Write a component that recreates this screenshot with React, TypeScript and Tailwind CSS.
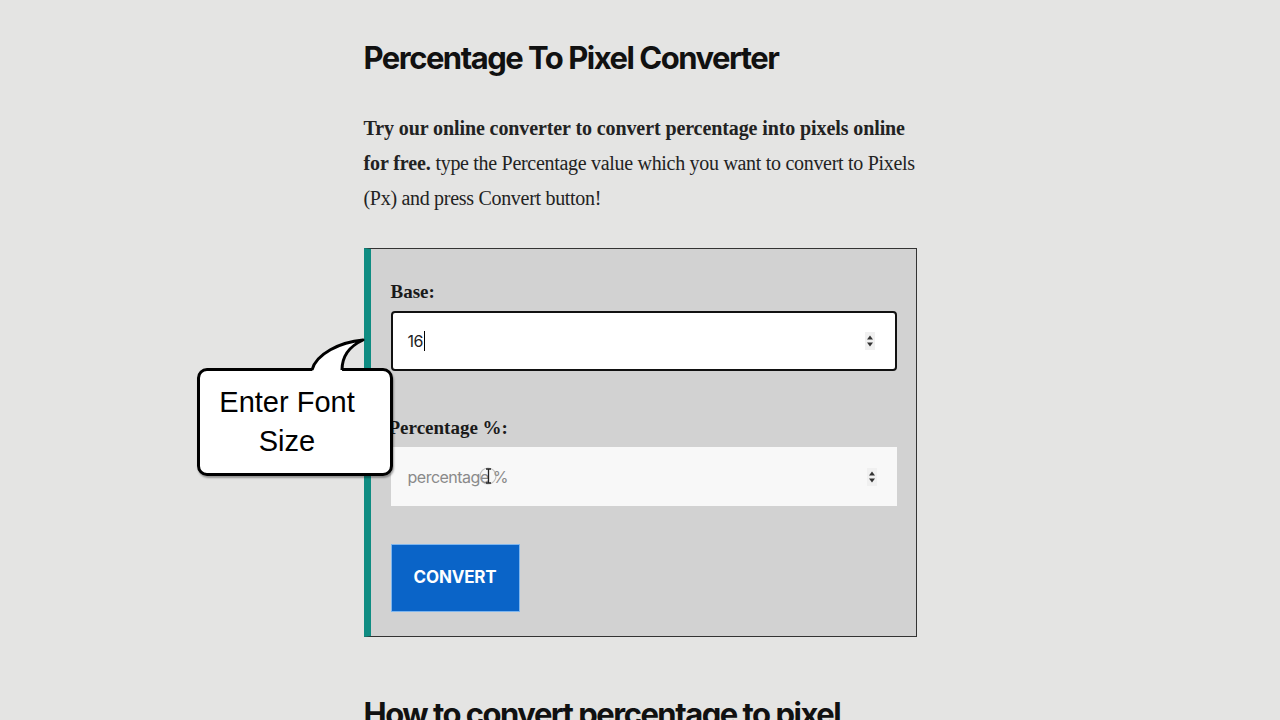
import React from "react";

export default function App() {
  return (
    <div className="relative min-h-[720px] h-[720px] overflow-hidden bg-[#e4e4e3]">
      <div className="mx-auto w-[553px] pt-[39px]">
        <h1 className="font-['Inter',sans-serif] text-[31px] leading-[37px] font-bold tracking-[-1.5px] text-[#111]">
          Percentage To Pixel Converter
        </h1>
        <p className="mt-[35px] whitespace-nowrap font-['Liberation_Serif',serif] text-[20px] leading-[35px] tracking-[-0.3px] text-[#222]">
          <span className="font-bold tracking-[-0.1px]">Try our online converter to convert percentage into pixels online<br />for free.</span>{" "}
          type the Percentage value which you want to convert to Pixels<br />(Px) and press Convert button!
        </p>

        <div className="mt-[32px] h-[389px] border border-[#333] border-l-[7px] border-l-[#0f8c82] bg-[#d2d2d2] pl-[20px] pr-[19px] pt-[31px]">
          <div className="font-['Liberation_Serif',serif] text-[19px] leading-[24px] font-bold text-[#1a1a1a] mb-[7px]">Base:</div>
          <div className="relative h-[60px] rounded-[4px] border-2 border-[#111] bg-white flex items-center pl-[15px]">
            <span className="font-['Inter',sans-serif] text-[16px] text-[#222] tracking-[-0.5px]">16</span>
            <span className="ml-[1px] inline-block h-[20px] w-[1px] bg-black"></span>
            <Spinner />
          </div>
          <div className="mt-[45px] -ml-[2px] font-['Liberation_Serif',serif] text-[19px] leading-[24px] font-bold text-[#1a1a1a] mb-[7px]">Percentage %:</div>
          <div className="relative h-[59px] bg-[#f8f8f8] flex items-center pl-[17px]">
            <span className="font-['Inter',sans-serif] text-[16px] text-[#8a8a8a] tracking-[-0.5px]">percentage %</span>
            <svg className="absolute left-[88px] top-[17px]" width="20" height="24" viewBox="0 0 20 24">
              <circle cx="9" cy="12" r="8" fill="none" stroke="#9a9a9a" strokeWidth="1.2" opacity="0.6" />
              <path d="M7 5h5M7 19h5M9.5 5v14" stroke="#222" strokeWidth="1.3" fill="none" />
            </svg>
            <Spinner />
          </div>
          <button className="mt-[38px] h-[68px] w-[129px] bg-[#0a64c8] border border-[#7fb6ee] text-white font-['Inter',sans-serif] font-bold text-[17px] tracking-[-0.2px]">
            CONVERT
          </button>
        </div>

        <h2 className="mt-[58px] font-['Inter',sans-serif] text-[31px] leading-[37px] font-bold tracking-[-1.5px] text-[#111]">
          How to convert percentage to pixel
        </h2>
      </div>

      {/* Callout */}
      <div className="absolute left-[197px] top-[368px] w-[196px] h-[108px] rounded-[10px] border-[3px] border-black bg-white flex items-center justify-center pr-[16px] shadow-[1px_2px_2px_rgba(0,0,0,0.35)]">
        <div className="font-['Liberation_Sans',Arial,sans-serif] text-[29px] leading-[39px] text-black text-center">
          Enter Font<br />Size
        </div>
      </div>
      <svg className="absolute left-[300px] top-[336px]" width="70" height="38" viewBox="0 0 70 38">
        <path d="M12 36 C16 18 40 6 63 4 C50 10 42 20 42 36 Z" fill="white" />
        <path d="M12 34 C16 18 40 6 63 4 C50 10 42 20 42 34" fill="none" stroke="black" strokeWidth="3" strokeLinejoin="round" />
      </svg>
    </div>
  );
}

function Spinner() {
  return (
    <svg className="absolute right-[20px] top-1/2 -translate-y-1/2" width="10" height="18" viewBox="0 0 10 18">
      <rect x="0" y="0" width="10" height="18" fill="#f0f0f0" />
      <path d="M2 7.5 L5 3.5 L8 7.5 Z" fill="#333" />
      <path d="M2 10.5 L5 14.5 L8 10.5 Z" fill="#333" />
    </svg>
  );
}
